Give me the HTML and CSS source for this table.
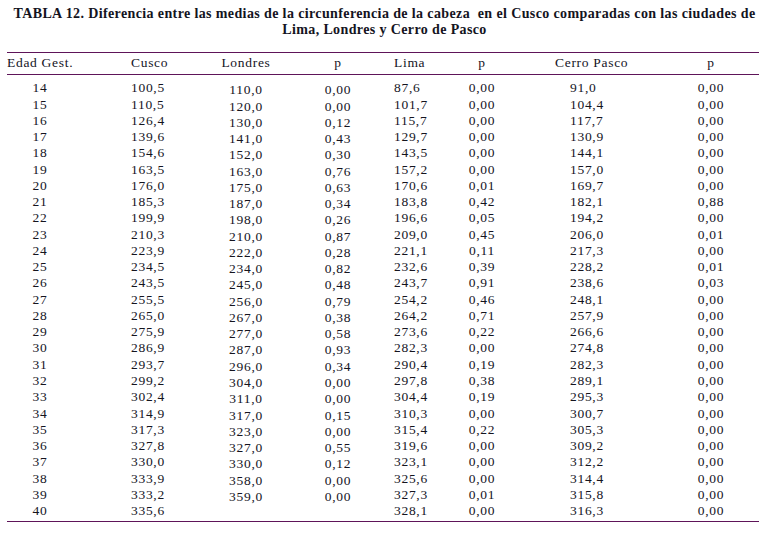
FILE: index.html
```html
<!DOCTYPE html>
<html lang="es">
<head>
<meta charset="utf-8">
<title>Tabla 12</title>
<link rel="stylesheet" href="styles.css">
</head>
<body>
<div class="page">
  <h1 class="title">TABLA 12. Diferencia entre las medias de la circunferencia de la cabeza&nbsp; en el Cusco comparadas con las ciudades de<br>Lima, Londres y Cerro de Pasco</h1>
  <div class="table">
    <div class="head">
      <div class="c1 left">Edad Gest.</div>
      <div class="c2">Cusco</div>
      <div class="c3">Londres</div>
      <div class="c4">p</div>
      <div class="c5">Lima</div>
      <div class="c6">p</div>
      <div class="c7h">Cerro Pasco</div>
      <div class="c8">p</div>
    </div>
    <div class="body">
      <div class="c1"><span>14</span><span>15</span><span>16</span><span>17</span><span>18</span><span>19</span><span>20</span><span>21</span><span>22</span><span>23</span><span>24</span><span>25</span><span>26</span><span>27</span><span>28</span><span>29</span><span>30</span><span>31</span><span>32</span><span>33</span><span>34</span><span>35</span><span>36</span><span>37</span><span>38</span><span>39</span><span>40</span></div>
      <div class="c2"><span>100,5</span><span>110,5</span><span>126,4</span><span>139,6</span><span>154,6</span><span>163,5</span><span>176,0</span><span>185,3</span><span>199,9</span><span>210,3</span><span>223,9</span><span>234,5</span><span>243,5</span><span>255,5</span><span>265,0</span><span>275,9</span><span>286,9</span><span>293,7</span><span>299,2</span><span>302,4</span><span>314,9</span><span>317,3</span><span>327,8</span><span>330,0</span><span>333,9</span><span>333,2</span><span>335,6</span></div>
      <div class="c3 low"><span>110,0</span><span>120,0</span><span>130,0</span><span>141,0</span><span>152,0</span><span>163,0</span><span>175,0</span><span>187,0</span><span>198,0</span><span>210,0</span><span>222,0</span><span>234,0</span><span>245,0</span><span>256,0</span><span>267,0</span><span>277,0</span><span>287,0</span><span>296,0</span><span>304,0</span><span>311,0</span><span>317,0</span><span>323,0</span><span>327,0</span><span>330,0</span><span>358,0</span><span>359,0</span></div>
      <div class="c4 low"><span>0,00</span><span>0,00</span><span>0,12</span><span>0,43</span><span>0,30</span><span>0,76</span><span>0,63</span><span>0,34</span><span>0,26</span><span>0,87</span><span>0,28</span><span>0,82</span><span>0,48</span><span>0,79</span><span>0,38</span><span>0,58</span><span>0,93</span><span>0,34</span><span>0,00</span><span>0,00</span><span>0,15</span><span>0,00</span><span>0,55</span><span>0,12</span><span>0,00</span><span>0,00</span></div>
      <div class="c5"><span>87,6</span><span>101,7</span><span>115,7</span><span>129,7</span><span>143,5</span><span>157,2</span><span>170,6</span><span>183,8</span><span>196,6</span><span>209,0</span><span>221,1</span><span>232,6</span><span>243,7</span><span>254,2</span><span>264,2</span><span>273,6</span><span>282,3</span><span>290,4</span><span>297,8</span><span>304,4</span><span>310,3</span><span>315,4</span><span>319,6</span><span>323,1</span><span>325,6</span><span>327,3</span><span>328,1</span></div>
      <div class="c6"><span>0,00</span><span>0,00</span><span>0,00</span><span>0,00</span><span>0,00</span><span>0,00</span><span>0,01</span><span>0,42</span><span>0,05</span><span>0,45</span><span>0,11</span><span>0,39</span><span>0,91</span><span>0,46</span><span>0,71</span><span>0,22</span><span>0,00</span><span>0,19</span><span>0,38</span><span>0,19</span><span>0,00</span><span>0,22</span><span>0,00</span><span>0,00</span><span>0,00</span><span>0,01</span><span>0,00</span></div>
      <div class="c7"><span>91,0</span><span>104,4</span><span>117,7</span><span>130,9</span><span>144,1</span><span>157,0</span><span>169,7</span><span>182,1</span><span>194,2</span><span>206,0</span><span>217,3</span><span>228,2</span><span>238,6</span><span>248,1</span><span>257,9</span><span>266,6</span><span>274,8</span><span>282,3</span><span>289,1</span><span>295,3</span><span>300,7</span><span>305,3</span><span>309,2</span><span>312,2</span><span>314,4</span><span>315,8</span><span>316,3</span></div>
      <div class="c8"><span>0,00</span><span>0,00</span><span>0,00</span><span>0,00</span><span>0,00</span><span>0,00</span><span>0,00</span><span>0,88</span><span>0,00</span><span>0,01</span><span>0,00</span><span>0,01</span><span>0,03</span><span>0,00</span><span>0,00</span><span>0,00</span><span>0,00</span><span>0,00</span><span>0,00</span><span>0,00</span><span>0,00</span><span>0,00</span><span>0,00</span><span>0,00</span><span>0,00</span><span>0,00</span><span>0,00</span></div>
    </div>
  </div>
</div>
</body>
</html>
```

FILE: styles.css
```css
html, body {
  margin: 0;
  padding: 0;
  background: #ffffff;
}

.page {
  width: 769px;
  padding-top: 5.8px;
  font-family: "Liberation Serif", "Times New Roman", serif;
  color: #14141e;
}

.title {
  margin: 0;
  font-size: 14px;
  line-height: 16px;
  letter-spacing: 0.38px;
  font-weight: bold;
  text-align: center;
}

.table {
  margin: 14.2px 0 0 7px;
  width: 752px;
  font-size: 13.5px;
  letter-spacing: 0.7px;
  line-height: 16.27px;
}

.head,
.body {
  display: grid;
  grid-template-columns: 66px 114px 118px 66px 76px 70px 146px 96px;
}

.head {
  border-top: 1px solid #5e1459;
  border-bottom: 1px solid #5e1459;
  padding: 2.3px 0 2.4px;
  white-space: nowrap;
}

.body {
  padding: 5.3px 0 1.4px;
  border-bottom: 1px solid #5e1459;
}

.body span {
  display: block;
  white-space: nowrap;
}

.c1 { text-align: center; }
.c1.left { text-align: left; }
.c2 { padding-left: 58px; }
.c3 { text-align: center; }
.c4 { text-align: center; }
.c5 { padding-left: 23px; }
.c6 { text-align: center; }
.c7 { padding-left: 53px; }
.c7h { padding-left: 38px; }
.c8 { text-align: center; }

.low { padding-top: 2px; }
```
